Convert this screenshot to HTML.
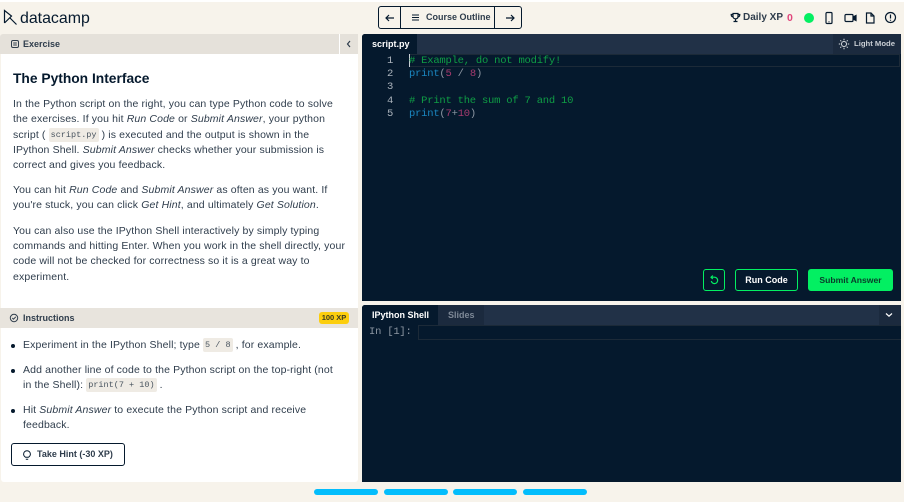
<!DOCTYPE html>
<html><head><meta charset="utf-8">
<style>
*{box-sizing:border-box;margin:0;padding:0}
html,body{width:904px;height:502px;overflow:hidden;background:#f7f3eb}
body{font-family:"Liberation Sans",sans-serif;color:#05192d;position:relative;filter:blur(.3px)}
.a{position:absolute;white-space:nowrap}
.t{position:absolute;left:13px;white-space:nowrap;font-size:10.5px;line-height:15px;color:#2f3d4c;letter-spacing:.13px}
.t i{font-style:italic}
.c{font-family:"Liberation Mono",monospace;font-size:8.5px;letter-spacing:0;background:#efebe4;border-radius:2px;padding:2px 2px;color:#4a5560;position:relative;top:-1px}
.m{font-family:"Liberation Mono",monospace;font-size:10.5px;letter-spacing:-.22px;line-height:13px;white-space:pre;position:absolute}
.g{color:#0f9d45}.b{color:#1a86c0}.p{color:#a63a6e}.w{color:#8d97a3}
.n{color:#aab2bb;left:387px}
.bl{position:absolute;top:489px;width:64px;height:6px;border-radius:3px;background:#03bdfc}
svg{position:absolute;fill:none}
</style></head><body>
<div class="a" style="left:0;top:0;width:904px;height:2px;background:#fff"></div>
<!-- logo -->
<svg style="left:3px;top:8px" width="16" height="18" viewBox="0 0 16 18" stroke="#05192d" stroke-width="1.2"><path d="M1.5 15V2.5L8.5 8L1.5 15M7 10L13.5 16.5"/></svg>
<div class="a" style="left:20px;top:8px;font-size:15.9px;line-height:21px;color:#05192d">datacamp</div>
<!-- nav -->
<div class="a" style="left:378px;top:6px;width:144px;height:23px;border:1.3px solid #05192d;border-radius:3px;background:#f7f3eb"></div>
<div class="a" style="left:400px;top:6px;width:1.3px;height:23px;background:#05192d"></div>
<div class="a" style="left:494px;top:6px;width:1.3px;height:23px;background:#05192d"></div>
<svg style="left:384px;top:12px" width="12" height="12" viewBox="0 0 12 12" stroke="#05192d" stroke-width="1.2"><path d="M10 6H2M5 3L2 6L5 9"/></svg>
<svg style="left:410px;top:12px" width="11" height="11" viewBox="0 0 11 11" stroke="#05192d" stroke-width="1"><path d="M2 3H9M2 5.5H9M2 8H9"/></svg>
<div class="a" style="left:426px;top:11px;font-size:9px;font-weight:bold;line-height:13px;color:#2f3d4c">Course Outline</div>
<svg style="left:504px;top:12px" width="12" height="12" viewBox="0 0 12 12" stroke="#05192d" stroke-width="1.2"><path d="M2 6H10M7 3L10 6L7 9"/></svg>
<!-- top right -->
<svg style="left:730px;top:12px" width="11" height="11" viewBox="0 0 11 11" stroke="#05192d" stroke-width="1.2"><path d="M3 1.5H8V4.5C8 6 7 6.8 5.5 6.8S3 6 3 4.5ZM5.5 7V9.5M3.5 9.5H7.5M3 2.5H1.2C1.2 4 2 4.8 3 4.8M8 2.5H9.8C9.8 4 9 4.8 8 4.8"/></svg>
<div class="a" style="left:743px;top:11px;font-size:10px;font-weight:bold;line-height:14px;color:#2f3d4c">Daily XP</div>
<div class="a" style="left:787px;top:11px;font-size:10.5px;font-weight:bold;line-height:14px;color:#e0457b">0</div>
<div class="a" style="left:804px;top:13px;width:10px;height:10px;border-radius:50%;background:#03ef62"></div>
<svg style="left:824px;top:11px" width="10" height="14" viewBox="0 0 10 14" stroke="#05192d" stroke-width="1.2"><rect x="2" y="1.5" width="6" height="11" rx="1"/><path d="M4.5 10.8H5.5"/></svg>
<svg style="left:844px;top:12px" width="13" height="12" viewBox="0 0 13 12" stroke="#05192d" stroke-width="1.2"><rect x="1" y="2.5" width="8" height="7" rx="1"/><path d="M9 5L12 3.5V8.5L9 7" fill="#05192d"/></svg>
<svg style="left:864px;top:11px" width="12" height="14" viewBox="0 0 12 14" stroke="#05192d" stroke-width="1.2"><path d="M2.5 2H7L10 5V12H2.5ZM7 2V5H10"/></svg>
<svg style="left:884px;top:11px" width="13" height="13" viewBox="0 0 13 13" stroke="#05192d" stroke-width="1.2"><circle cx="6.5" cy="6.5" r="5"/><path d="M6.5 3.5V7.5M6.5 8.7V9.8"/></svg>
<!-- left panel -->
<div class="a" style="left:1px;top:34px;width:357px;height:448px;background:#fff;border-radius:3px"></div>
<div class="a" style="left:0;top:34px;width:339px;height:20px;background:#e5e1da;border-radius:3px 0 0 0"></div>
<div class="a" style="left:340px;top:34px;width:18px;height:20px;background:#e5e1da"></div>
<svg style="left:10px;top:39px" width="10" height="10" viewBox="0 0 10 10" stroke="#2f3d4c" stroke-width="1"><rect x="1.5" y="1.5" width="7" height="7" rx="1.5"/><path d="M3.2 4H6.8M3.2 6H6.8"/></svg>
<div class="a" style="left:23px;top:38px;font-size:9px;font-weight:bold;line-height:12px;color:#2f3d4c">Exercise</div>
<svg style="left:344px;top:39px" width="10" height="10" viewBox="0 0 10 10" stroke="#2f3d4c" stroke-width="1.2"><path d="M6 2L3.5 5L6 8"/></svg>
<div class="a" style="left:13px;top:70px;font-size:13.8px;font-weight:bold;line-height:18px;color:#05192d">The Python Interface</div>
<div class="t" style="top:97px">In the Python script on the right, you can type Python code to solve</div>
<div class="t" style="top:112px">the exercises. If you hit <i>Run Code</i> or <i>Submit Answer</i>, your python</div>
<div class="t" style="top:128px">script ( <span class="c">script.py</span> ) is executed and the output is shown in the</div>
<div class="t" style="top:143px">IPython Shell. <i>Submit Answer</i> checks whether your submission is</div>
<div class="t" style="top:158px">correct and gives you feedback.</div>
<div class="t" style="top:183px">You can hit <i>Run Code</i> and <i>Submit Answer</i> as often as you want. If</div>
<div class="t" style="top:198px">you're stuck, you can click <i>Get Hint</i>, and ultimately <i>Get Solution</i>.</div>
<div class="t" style="top:224px">You can also use the IPython Shell interactively by simply typing</div>
<div class="t" style="top:239px">commands and hitting Enter. When you work in the shell directly, your</div>
<div class="t" style="top:254px">code will not be checked for correctness so it is a great way to</div>
<div class="t" style="top:270px">experiment.</div>
<div class="a" style="left:0;top:308px;width:358px;height:20px;background:#e8e4dd"></div>
<svg style="left:9px;top:313px" width="10" height="10" viewBox="0 0 10 10" stroke="#2f3d4c" stroke-width="1"><circle cx="5" cy="5" r="3.7"/><path d="M3.3 5L4.5 6.2L6.8 3.8"/></svg>
<div class="a" style="left:23px;top:312px;font-size:9px;font-weight:bold;line-height:12px;color:#2f3d4c">Instructions</div>
<div class="a" style="left:319px;top:312px;width:30px;height:12px;border-radius:3px;background:#fcce0d;font-size:7.5px;font-weight:bold;line-height:12px;text-align:center;color:#3a3a20">100 XP</div>
<div class="a" style="left:11px;top:344px;width:4px;height:4px;border-radius:50%;background:#05192d"></div>
<div class="a" style="left:11px;top:369px;width:4px;height:4px;border-radius:50%;background:#05192d"></div>
<div class="a" style="left:11px;top:409px;width:4px;height:4px;border-radius:50%;background:#05192d"></div>
<div class="t" style="left:23px;top:338px">Experiment in the IPython Shell; type <span class="c">5 / 8</span> , for example.</div>
<div class="t" style="left:23px;top:363px">Add another line of code to the Python script on the top-right (not</div>
<div class="t" style="left:23px;top:378px">in the Shell): <span class="c">print(7 + 10)</span> .</div>
<div class="t" style="left:23px;top:403px">Hit <i>Submit Answer</i> to execute the Python script and receive</div>
<div class="t" style="left:23px;top:418px">feedback.</div>
<div class="a" style="left:11px;top:443px;width:114px;height:23px;border:1.3px solid #05192d;border-radius:3px"></div>
<svg style="left:21px;top:449px" width="12" height="12" viewBox="0 0 12 12" stroke="#05192d" stroke-width="1"><path d="M4.5 8.2C3.3 7.4 2.6 6.4 2.6 5.1A3.4 3.4 0 0 1 9.4 5.1C9.4 6.4 8.7 7.4 7.5 8.2ZM4.8 10.3H7.2"/></svg>
<div class="a" style="left:37px;top:448px;font-size:9px;font-weight:bold;line-height:13px;color:#2f3d4c">Take Hint (-30 XP)</div>
<!-- editor -->
<div class="a" style="left:362px;top:34px;width:539px;height:267px;background:#05192d;border-radius:3px 3px 0 0"></div>
<div class="a" style="left:362px;top:34px;width:539px;height:20px;background:#213147;border-radius:3px 3px 0 0"></div>
<div class="a" style="left:362px;top:34px;width:55px;height:20px;background:#05192d;border-radius:3px 0 0 0"></div>
<div class="a" style="left:372px;top:38px;font-size:9px;font-weight:bold;line-height:12px;color:#fff">script.py</div>
<div class="a" style="left:833px;top:34px;width:68px;height:20px;background:#1b2a3e"></div>
<svg style="left:838px;top:38px" width="12" height="12" viewBox="0 0 12 12" stroke="#d9dde2" stroke-width="1"><circle cx="6" cy="6" r="2.5"/><path d="M6 .8V2.2M6 9.8V11.2M.8 6H2.2M9.8 6H11.2M2.3 2.3L3.3 3.3M8.7 8.7L9.7 9.7M2.3 9.7L3.3 8.7M8.7 3.3L9.7 2.3"/></svg>
<div class="a" style="left:854px;top:38px;font-size:7.7px;font-weight:bold;line-height:12px;color:#c9ced4">Light Mode</div>
<div class="a" style="left:409px;top:54px;width:491px;height:13px;border:1px solid #1c2a38;border-left:0"></div>
<div class="a" style="left:409px;top:54px;width:1px;height:13px;background:#c9ced4"></div>
<div class="m n" style="top:55px">1</div><div class="m n" style="top:68px">2</div><div class="m n" style="top:81px">3</div><div class="m n" style="top:95px">4</div><div class="m n" style="top:108px">5</div>
<div class="m g" style="left:409px;top:55px"># Example, do not modify!</div>
<div class="m" style="left:409px;top:68px"><span class="b">print</span><span class="w">(</span><span class="p">5</span><span class="w"> / </span><span class="p">8</span><span class="w">)</span></div>
<div class="m g" style="left:409px;top:95px"># Print the sum of 7 and 10</div>
<div class="m" style="left:409px;top:108px"><span class="b">print</span><span class="w">(</span><span class="p">7</span><span class="w">+</span><span class="p">10</span><span class="w">)</span></div>
<div class="a" style="left:703px;top:269px;width:22px;height:22px;border:1.3px solid #03ef62;border-radius:3px"></div>
<svg style="left:708px;top:274px" width="12" height="12" viewBox="0 0 12 12" stroke="#03ef62" stroke-width="1.2"><path d="M3.2 3.2H6.5A3.2 3.2 0 1 1 3.3 7M4.8 1.5L3 3.2L4.8 5"/></svg>
<div class="a" style="left:735px;top:269px;width:63px;height:22px;border:1.3px solid #03ef62;border-radius:3px;font-size:9px;font-weight:bold;line-height:20px;text-align:center;color:#fff">Run Code</div>
<div class="a" style="left:808px;top:269px;width:85px;height:22px;background:#03ef62;border-radius:3px;font-size:8.6px;font-weight:bold;line-height:22px;text-align:center;color:#0a3b2a">Submit Answer</div>
<!-- shell -->
<div class="a" style="left:362px;top:305px;width:539px;height:177px;background:#05192d;border-radius:3px 3px 0 0"></div>
<div class="a" style="left:362px;top:305px;width:539px;height:20px;background:#213147;border-radius:3px 3px 0 0"></div>
<div class="a" style="left:362px;top:305px;width:76px;height:20px;background:#05192d;border-radius:3px 0 0 0"></div>
<div class="a" style="left:438px;top:305px;width:46px;height:20px;background:#1b2a3e"></div>
<div class="a" style="left:372px;top:309px;font-size:9px;font-weight:bold;line-height:12px;color:#fff">IPython Shell</div>
<div class="a" style="left:448px;top:309px;font-size:9px;font-weight:bold;line-height:12px;color:#7d8896">Slides</div>
<div class="a" style="left:879px;top:305px;width:22px;height:20px;background:#1b2a3e"></div>
<svg style="left:884px;top:310px" width="10" height="10" viewBox="0 0 10 10" stroke="#fff" stroke-width="1.2"><path d="M2 3.5L5 6.2L8 3.5"/></svg>
<div class="m" style="left:369px;top:326px;color:#8d97a3">In [1]:</div>
<div class="a" style="left:418px;top:325px;width:483px;height:15px;border:1px solid #1c2a38;border-right:0"></div>
<!-- bottom -->
<div class="bl" style="left:314px"></div><div class="bl" style="left:384px"></div><div class="bl" style="left:453px"></div><div class="bl" style="left:523px"></div>
</body></html>
